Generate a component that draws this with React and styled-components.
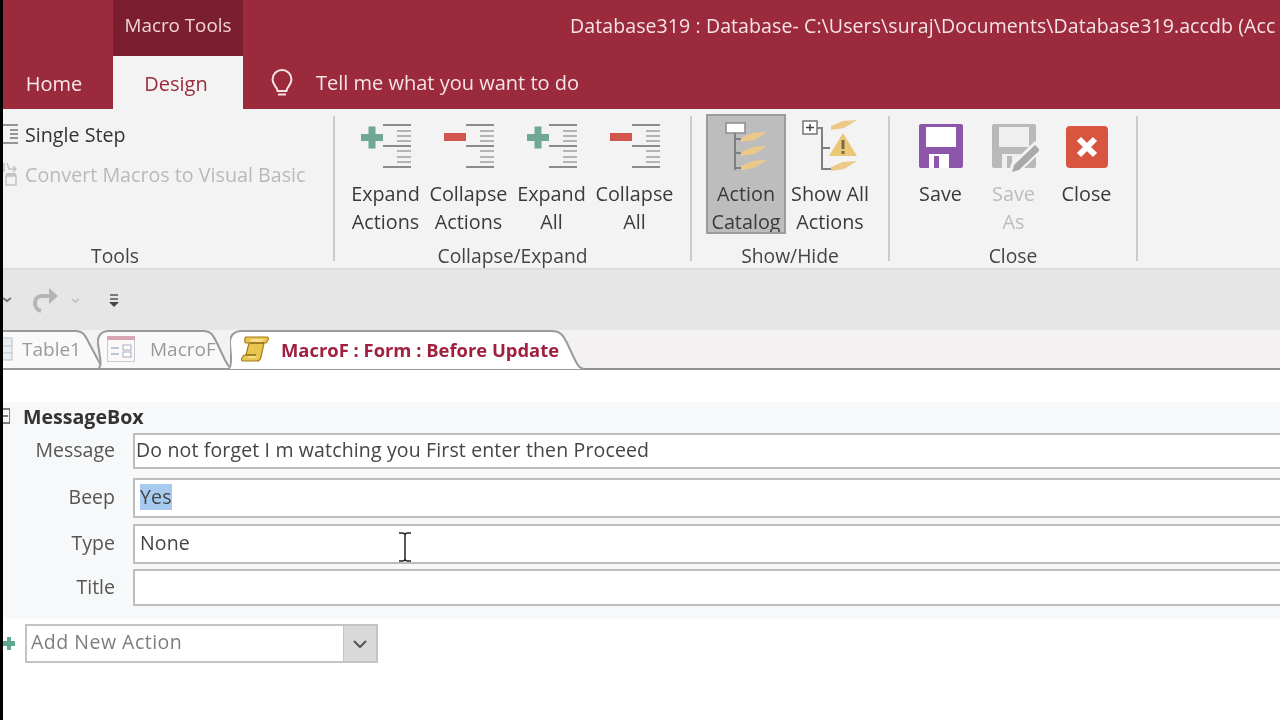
import React from 'react'
import styled, { createGlobalStyle } from 'styled-components'

const Global = createGlobalStyle`
  html, body { margin: 0; padding: 0; background: #fff; }
  body { font-family: "Open Sans", "Liberation Sans", sans-serif; overflow: hidden; }
`

const Page = styled.div`
  position: relative;
  width: 1277px;
  height: 720px;
  border-left: 3px solid #000;
  background: #fff;
  overflow: hidden;
  filter: blur(0.35px);
`

const TitleBar = styled.div`
  height: 56px;
  background: #9b2a3c;
  display: flex;
  white-space: nowrap;
`
const ContextTab = styled.div`
  margin-left: 110px;
  width: 130px;
  flex: none;
  background: #7b1f2e;
  color: #f0d5d9;
  font-size: 18.8px;
  line-height: 50px;
  text-align: center;
`
const DocTitle = styled.div`
  margin-left: 327px;
  flex: none;
  color: #f5e3e6;
  font-size: 19.5px;
  letter-spacing: 0.1px;
  line-height: 52px;
`

const TabRow = styled.div`
  height: 53px;
  background: #9b2a3c;
  display: flex;
  align-items: stretch;
`
const MenuTab = styled.div`
  width: ${p => p.$w}px;
  box-sizing: border-box;
  padding-right: ${p => p.$pad || 0}px;
  background: ${p => (p.$active ? '#f3f3f3' : 'transparent')};
  color: ${p => (p.$active ? '#9b2a3c' : '#f7e8ea')};
  font-size: 20px;
  line-height: 56px;
  text-align: center;
`
const TellMe = styled.div`
  display: flex;
  align-items: center;
  gap: 22px;
  margin-left: 27px;
  color: #f5e3e6;
  font-size: 20px;
`

const Ribbon = styled.div`
  height: 161px;
  background: #f3f3f3;
  display: flex;
  border-bottom: 2px solid #dcdcdc;
  box-sizing: border-box;
`
const Group = styled.div`
  width: ${p => p.$w}px;
  flex: none;
  display: flex;
  flex-direction: column;
`
const ButtonRow = styled.div`
  height: 120px;
  margin-top: 5px;
  padding-left: ${p => p.$pad || 0}px;
  display: flex;
`
const GroupLabel = styled.div`
  margin-top: 10px;
  padding-right: ${p => p.$pad || 0}px;
  height: 24px;
  line-height: 24px;
  text-align: center;
  font-size: 19.3px;
  color: #444;
`
const Sep = styled.div`
  width: 2px;
  flex: none;
  margin: 7px 0 7px;
  background: #cbcbcb;
`
const ToolList = styled.div`
  height: 120px;
  margin-top: 5px;
  display: flex;
  flex-direction: column;
`
const ToolRow = styled.div`
  height: 40px;
  display: flex;
  align-items: center;
  gap: 6px;
  font-size: 19.7px;
  white-space: nowrap;
  color: ${p => (p.$off ? '#b9b9b9' : '#333')};
`
const LargeButton = styled.div`
  width: ${p => p.$w}px;
  height: 120px;
  flex: none;
  box-sizing: border-box;
  padding-top: 4px;
  display: flex;
  flex-direction: column;
  align-items: center;
  text-align: center;
  font-size: 19.8px;
  line-height: 28px;
  color: ${p => (p.$off ? '#bcbcbc' : '#3a3a3a')};
  background: ${p => (p.$on ? '#bdbdbd' : 'transparent')};
  outline: ${p => (p.$on ? '2px solid #9c9c9c' : 'none')};
  outline-offset: -2px;
  white-space: nowrap;
`
const IconBox = styled.div`
  height: 62px;
  flex: none;
  display: flex;
  justify-content: center;
`

const Qat = styled.div`
  height: 60px;
  background: #e6e6e6;
  display: flex;
  align-items: center;
`

const TabStrip = styled.div`
  height: 40px;
  display: flex;
  background: #f3f1f1;
  border-bottom: 2px solid #8f8f8f;
  box-sizing: border-box;
`
const DocTab = styled.div`
  position: relative;
  width: ${p => p.$w}px;
  flex: none;
  display: flex;
  align-items: center;
  padding-left: ${p => p.$pad}px;
  box-sizing: border-box;
  font-size: ${p => (p.$active ? 18.4 : 19)}px;
  font-weight: ${p => (p.$active ? 700 : 400)};
  color: ${p => (p.$active ? '#a0213f' : '#9a9a9a')};
  white-space: nowrap;
  & > span, & > svg.tab-icon { position: relative; }
`
const TabLabel = styled.span`
  margin-left: ${p => p.$ml}px;
`
const TabShape = styled.svg`
  position: absolute;
  left: 0;
  top: 0;
`

const MacroPanel = styled.div`
  margin-top: 32px;
  height: 217px;
  background: #f6f8f9;
  display: flex;
  flex-direction: column;
`
const BlockHead = styled.div`
  height: 31px;
  padding-bottom: 3px;
  box-sizing: border-box;
  display: flex;
  align-items: center;
  gap: 13px;
  font-size: 19.6px;
  font-weight: 700;
  color: #333;
`
const FieldRow = styled.div`
  display: flex;
  margin-top: ${p => p.$mt}px;
`
const FieldLabel = styled.div`
  width: 112px;
  flex: none;
  text-align: right;
  font-size: 19.5px;
  line-height: ${p => p.$h - 2}px;
  color: #555;
`
const FieldInput = styled.div`
  margin-left: 18px;
  width: 1200px;
  height: ${p => p.$h}px;
  box-sizing: border-box;
  border: 2px solid #bdbdbd;
  border-right: none;
  background: #fff;
  padding-left: ${p => p.$pad || 5}px;
  font-size: 19.5px;
  letter-spacing: 0.15px;
  line-height: ${p => p.$h - 7}px;
  color: #444;
  white-space: nowrap;
`
const Selected = styled.span`
  background: #a6cbee;
  display: inline-block;
  line-height: 26px;
  margin-top: 3px;
`

const AddRow = styled.div`
  margin-top: 5px;
  display: flex;
  align-items: center;
`
const AddBox = styled.div`
  margin-left: 10px;
  width: 353px;
  height: 39px;
  box-sizing: border-box;
  border: 2px solid #c4c4c4;
  background: #fff;
  display: flex;
  justify-content: space-between;
  align-items: stretch;
  padding-left: 4px;
  font-size: 19.5px;
  letter-spacing: 0.5px;
  line-height: 31px;
  color: #7d7d7d;
`
const DropButton = styled.div`
  width: 32px;
  background: #d9d9d9;
  border-left: 1px solid #c4c4c4;
  display: flex;
  align-items: center;
  justify-content: center;
`
const Cursor = styled.svg`
  position: absolute;
  left: 395px;
  top: 532px;
`

const ActionsIcon = ({ plus }) => (
  <svg width="50" height="56" viewBox="0 0 50 56">
    {plus ? (
      <path d="M7.500 8.500h7V16H22v7h-7.500v7.500h-7V23H0v-7h7.500z" fill="#6fa896" />
    ) : (
      <rect y="15" width="22" height="8" fill="#d2564e" />
    )}
    {[7, 28, 49].map(y => <rect key={y} x="22" y={y - 1} width="28" height="2" fill="#8b8b8b" />)}
    {[13, 18, 23, 33, 39, 44].map(y => <rect key={y} x="36" y={y - 1} width="14" height="2" fill="#b4b4b4" />)}
  </svg>
)

const Bolt = ({ x, y, w = 26 }) => (
  <path d={`M${x} ${y + 6}l${w * 0.45}-5 ${w * 0.55}-1-${w * 0.3} 5-${w * 0.2} 3-${w * 0.5} 2z`} fill="#ecc98a" />
)

const CatalogIcon = () => (
  <svg width="50" height="56" viewBox="0 0 50 56">
    <rect x="5" y="5" width="19" height="10" fill="#fff" stroke="#8a8a8a" strokeWidth="1.500" />
    <path d="M14 15v37M14 21h7M14 35h7M14 50h7" stroke="#808080" strokeWidth="2" fill="none" />
    <Bolt x={20} y={14} />
    <Bolt x={20} y={28} />
    <Bolt x={20} y={42} />
  </svg>
)

const ShowAllIcon = () => (
  <svg width="56" height="56" viewBox="0 0 56 56">
    <rect x="1" y="3" width="14" height="13" fill="#fff" stroke="#777" strokeWidth="1.500" />
    <path d="M4 9.500h8M8 6v7" stroke="#444" strokeWidth="1.500" />
    <path d="M15 10h5v41h10M20 30h8" stroke="#808080" strokeWidth="2" fill="none" />
    <Bolt x={29} y={2} />
    <path d="M41 15l14 23H27z" fill="#ecc777" />
    <rect x="39.500" y="22" width="3" height="9" fill="#7a6a45" />
    <rect x="39.500" y="33" width="3" height="3" fill="#7a6a45" />
    <Bolt x={29} y={43} />
  </svg>
)

const SaveIcon = ({ gray }) => {
  const c = gray ? '#b9b9b9' : '#8e56ab'
  const fill = gray ? '#efefef' : '#fff'
  return (
    <svg width="50" height="56" viewBox="0 0 50 56">
      <path d="M3 8a2 2 0 0 1 2-2h40a2 2 0 0 1 2 2v40a2 2 0 0 1-2 2H5a2 2 0 0 1-2-2z" fill={c} />
      <rect x="10" y="9" width="30" height="20" fill={fill} />
      <rect x="13" y="36" width="20" height="14" fill={fill} />
      <rect x="18" y="38" width="5" height="12" fill={c} />
      {gray && (
        <g>
          <path d="M20 56l2-10 24-23 9 8-24 23z" fill="#f3f3f3" />
          <path d="M23 54l2-7 21-20 5 5-21 20z" fill="#a9a9a9" />
        </g>
      )}
    </svg>
  )
}

const CloseIcon = () => (
  <svg width="44" height="56" viewBox="0 0 44 56">
    <rect x="1" y="8" width="42" height="42" rx="4" fill="#d8553f" />
    <path d="M14 21l16 16M30 21L14 37" stroke="#fff" strokeWidth="6" fill="none" />
  </svg>
)

const StepIcon = () => (
  <svg width="16" height="22" viewBox="0 0 16 22" style={{ flex: 'none' }}>
    <path d="M0 2h15M7 7h8M7 11h8M7 15h8M0 20h15" stroke="#777" strokeWidth="1.500" />
  </svg>
)
const ConvertIcon = () => (
  <svg width="16" height="26" viewBox="0 0 16 26" style={{ flex: 'none' }}>
    <path d="M1 2v9M4 2l2 6h7M10 5l3 3-3 3" stroke="#c4c4c4" strokeWidth="1.500" fill="none" />
    <rect x="3" y="15" width="10" height="9" fill="none" stroke="#c4c4c4" strokeWidth="1.500" />
    <rect x="3" y="12" width="10" height="3" fill="#c4c4c4" />
  </svg>
)

const BulbIcon = () => (
  <svg width="24" height="30" viewBox="0 0 24 30" fill="none" stroke="#f5e3e6" strokeWidth="2">
    <path d="M12 2a9.500 9.500 0 0 0-9.500 9.500c0 3.600 2 5.600 4 8.500.8 1.200.9 2 1 3h9c.1-1 .2-1.800 1-3 2-2.900 4-4.900 4-8.500A9.500 9.500 0 0 0 12 2z" />
    <path d="M8 26.500h8" />
  </svg>
)

const TableIcon = () => (
  <svg className="tab-icon" width="10" height="24" viewBox="0 0 10 24">
    <rect x="-6" y="1" width="15" height="22" fill="#e9eef3" stroke="#b9c3cf" />
    <path d="M0 9h9M0 16h9" stroke="#b9c3cf" />
  </svg>
)
const FormIcon = () => (
  <svg className="tab-icon" width="28" height="26" viewBox="0 0 28 26">
    <rect x="0.500" y="0.500" width="27" height="25" fill="#fbf8f9" stroke="#c9c9d2" />
    <rect x="0" y="0" width="28" height="4" fill="#d9a5b3" />
    <path d="M4 12h8M4 18h8" stroke="#b9c6d4" strokeWidth="2" />
    <rect x="16" y="9" width="8" height="5" fill="#fff" stroke="#aab" />
    <rect x="16" y="16" width="8" height="5" fill="#fff" stroke="#aab" />
  </svg>
)
const ScrollIcon = () => (
  <svg className="tab-icon" width="28" height="26" viewBox="0 0 28 26">
    <path d="M5 1h21c1.500 0 1.500 1.500 1 3l-2 3h-2l-3 14c-.5 2-1 4-4 4H2c-1.500 0-2-1.500-1-3l2-3h2L8 7H5C3.500 7 3 3 5 1z" fill="#e9c650" stroke="#a37c1d" strokeWidth="1.200" />
    <path d="M10 3h13l-2 3H9zM8 19h7l-1 3H6z" fill="#f6df8a" />
    <path d="M9 7h14M5 19h10" stroke="#8a6716" strokeWidth="1.300" />
  </svg>
)

const Shape = ({ w, d, fill }) => (
  <TabShape width={w} height="40" viewBox={`0 0 ${w} 40`}>
    <path d={d} fill={fill} stroke="#9a9a9a" strokeWidth="2" />
  </TabShape>
)

const App = () => {
  return (
    <Page>
      <Global />
      <TitleBar>
        <ContextTab>Macro Tools</ContextTab>
        <DocTitle>Database319 : Database- C:\Users\suraj\Documents\Database319.accdb (Acc</DocTitle>
      </TitleBar>
      <TabRow>
        <MenuTab $w={110} $pad={8}>Home</MenuTab>
        <MenuTab $w={130} $pad={4} $active>Design</MenuTab>
        <TellMe>
          <BulbIcon />
          Tell me what you want to do
        </TellMe>
      </TabRow>

      <Ribbon>
        <Group $w={330}>
          <ToolList>
            <ToolRow><StepIcon />Single Step</ToolRow>
            <ToolRow $off><ConvertIcon />Convert Macros to Visual Basic</ToolRow>
          </ToolList>
          <GroupLabel $pad={106}>Tools</GroupLabel>
        </Group>
        <Sep />
        <Group $w={355}>
          <ButtonRow $pad={9}>
            <LargeButton $w={83}><IconBox><ActionsIcon plus /></IconBox>Expand<br />Actions</LargeButton>
            <LargeButton $w={83}><IconBox><ActionsIcon /></IconBox>Collapse<br />Actions</LargeButton>
            <LargeButton $w={83}><IconBox><ActionsIcon plus /></IconBox>Expand<br />All</LargeButton>
            <LargeButton $w={83}><IconBox><ActionsIcon /></IconBox>Collapse<br />All</LargeButton>
          </ButtonRow>
          <GroupLabel>Collapse/Expand</GroupLabel>
        </Group>
        <Sep />
        <Group $w={196}>
          <ButtonRow $pad={14}>
            <LargeButton $w={80} $on><IconBox><CatalogIcon /></IconBox>Action<br />Catalog</LargeButton>
            <LargeButton $w={88}><IconBox><ShowAllIcon /></IconBox>Show All<br />Actions</LargeButton>
          </ButtonRow>
          <GroupLabel>Show/Hide</GroupLabel>
        </Group>
        <Sep />
        <Group $w={246}>
          <ButtonRow $pad={14}>
            <LargeButton $w={73}><IconBox><SaveIcon /></IconBox>Save</LargeButton>
            <LargeButton $w={73} $off><IconBox><SaveIcon gray /></IconBox>Save<br />As</LargeButton>
            <LargeButton $w={73}><IconBox><CloseIcon /></IconBox>Close</LargeButton>
          </ButtonRow>
          <GroupLabel>Close</GroupLabel>
        </Group>
        <Sep />
      </Ribbon>

      <Qat>
        <svg width="125" height="30" viewBox="0 0 125 30">
          <path d="M0 13l4 3 4-3" stroke="#777" strokeWidth="2" fill="none" />
          <path d="M38 26c-8-2-8-14 0-15h9" stroke="#b5b5b5" strokeWidth="4" fill="none" />
          <path d="M46 3l9 8-9 8z" fill="#b5b5b5" />
          <path d="M69 14l3.500 3 3.500-3" stroke="#bbb" strokeWidth="1.500" fill="none" />
          <path d="M107 10h8M107 14h8" stroke="#555" strokeWidth="1.500" />
          <path d="M106 17h10l-5 5z" fill="#444" />
        </svg>
      </Qat>

      <TabStrip>
        <DocTab $w={94} $pad={0}>
          <Shape w={108} d="M-4 1H72c8 0 10 4 14 12l9 17c2 5 5 9 12 9H-4z" fill="#f9f9f9" />
          <TableIcon />
          <TabLabel $ml={9}>Table1</TabLabel>
        </DocTab>
        <DocTab $w={133} $pad={10}>
          <Shape w={136} d="M1 39C4 37 4 33 3 27L1 14C0 6 4 1 12 1H106c8 0 10 4 14 12l8 17c2 4 4 7 7 9z" fill="#f9f9f9" />
          <FormIcon />
          <TabLabel $ml={15}>MacroF</TabLabel>
        </DocTab>
        <DocTab $w={355} $pad={11} $active>
          <Shape w={355} d="M-2 40C1 37 1 33 1 27L0 14C-1 6 4 1 12 1H322c8 0 11 4 15 12l8 17c3 6 5 9 10 9v1z" fill="#fff" />
          <ScrollIcon />
          <TabLabel $ml={12}>MacroF : Form : Before Update</TabLabel>
        </DocTab>
      </TabStrip>

      <MacroPanel>
        <BlockHead>
          <svg width="7" height="16" viewBox="0 0 7 16">
            <path d="M0 1h7v14H0M0 8h5" stroke="#555" strokeWidth="1.500" fill="none" />
          </svg>
          MessageBox
        </BlockHead>
        <FieldRow $mt={0}>
          <FieldLabel $h={36}>Message</FieldLabel>
          <FieldInput $h={36} $pad={1}>Do not forget I m watching you First enter then Proceed</FieldInput>
        </FieldRow>
        <FieldRow $mt={9}>
          <FieldLabel $h={40}>Beep</FieldLabel>
          <FieldInput $h={40}><Selected>Yes</Selected></FieldInput>
        </FieldRow>
        <FieldRow $mt={6}>
          <FieldLabel $h={40}>Type</FieldLabel>
          <FieldInput $h={40}>None</FieldInput>
        </FieldRow>
        <FieldRow $mt={5}>
          <FieldLabel $h={37}>Title</FieldLabel>
          <FieldInput $h={37} />
        </FieldRow>
      </MacroPanel>

      <AddRow>
        <svg width="12" height="16" viewBox="0 0 12 16">
          <path d="M0 5h4V1h4v4h4v5H8v4H4v-4H0z" fill="#5fa88f" />
        </svg>
        <AddBox>
          Add New Action
          <DropButton>
            <svg width="16" height="10" viewBox="0 0 16 10">
              <path d="M2 2l6 6 6-6" stroke="#555" strokeWidth="2" fill="none" />
            </svg>
          </DropButton>
        </AddBox>
      </AddRow>

      <Cursor width="14" height="30" viewBox="0 0 14 30">
        <path d="M1 1h3c2 0 3 1 3 2 0-1 1-2 3-2h3M7 3v24M1 29h3c2 0 3-1 3-2 0 1 1 2 3 2h3" stroke="#222" strokeWidth="1.500" fill="none" />
      </Cursor>
    </Page>
  )
}

export default App
